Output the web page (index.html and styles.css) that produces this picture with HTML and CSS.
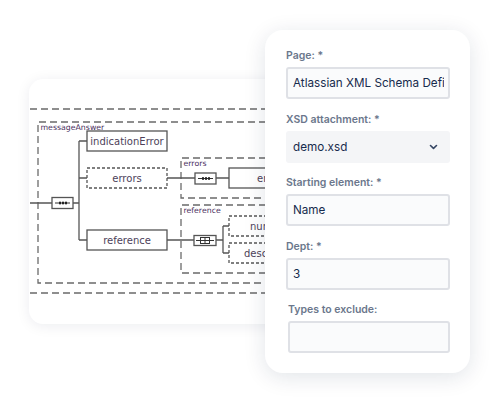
FILE: index.html
```html
<!DOCTYPE html>
<html>
<head>
<meta charset="utf-8">
<link rel="stylesheet" href="styles.css">
</head>
<body>
<div class="stage">
  <div class="diagram-card">
    <svg class="diagram" width="391" height="245" viewBox="29 79 391 245" xmlns="http://www.w3.org/2000/svg">
      <g fill="none" stroke="#6a6a6a" stroke-width="1.3" stroke-dasharray="7 4">
        <line x1="30" y1="109" x2="420" y2="109"/>
        <line x1="30" y1="293" x2="420" y2="293"/>
        <path d="M420 122 H38 V283 H420"/>
        <path d="M420 158 H181 V198 H420"/>
        <path d="M420 205 H181 V273 H420"/>
      </g>
      <g fill="none" stroke="#555" stroke-width="1.3">
        <line x1="30" y1="203" x2="52" y2="203"/>
        <rect x="52" y="197.5" width="21" height="11"/>
        <line x1="73" y1="203" x2="79" y2="203"/>
        <line x1="79" y1="141" x2="79" y2="240"/>
        <line x1="79" y1="141" x2="87" y2="141"/>
        <line x1="79" y1="178" x2="87" y2="178"/>
        <line x1="79" y1="240" x2="87" y2="240"/>
        <rect x="87" y="131" width="80" height="20"/>
        <rect x="87" y="168" width="80" height="20" stroke-dasharray="3 2"/>
        <rect x="87" y="230" width="80" height="20"/>
        <line x1="167" y1="178" x2="195" y2="178"/>
        <rect x="195" y="173" width="21" height="11"/>
        <line x1="216" y1="178" x2="229" y2="178"/>
        <rect x="229" y="168" width="110" height="20"/>
        <line x1="167" y1="240" x2="194" y2="240"/>
        <rect x="194" y="235.5" width="22" height="10"/>
        <line x1="216" y1="240" x2="223" y2="240"/>
        <line x1="223" y1="226" x2="223" y2="253"/>
        <line x1="223" y1="226" x2="229" y2="226"/>
        <line x1="223" y1="253" x2="229" y2="253"/>
        <rect x="229" y="216" width="100" height="20" stroke-dasharray="3 2"/>
        <rect x="229" y="243" width="100" height="20" stroke-dasharray="3 2"/>
      </g>
      <g stroke="#333" stroke-width="1">
        <line x1="55" y1="203" x2="70" y2="203"/>
        <line x1="198" y1="178.5" x2="213" y2="178.5"/>
        <line x1="196" y1="240.5" x2="214" y2="240.5"/>
        <rect x="200.5" y="237.5" width="9" height="6" fill="none"/>
        <line x1="205" y1="237.5" x2="205" y2="243.5"/>
      </g>
      <g fill="#222">
        <rect x="59" y="201.7" width="2" height="2.6"/>
        <rect x="62" y="201.7" width="2" height="2.6"/>
        <rect x="65" y="201.7" width="2" height="2.6"/>
        <rect x="202" y="177.2" width="2" height="2.6"/>
        <rect x="205" y="177.2" width="2" height="2.6"/>
        <rect x="208" y="177.2" width="2" height="2.6"/>
      </g>
      <g class="group-label">
        <text x="40.5" y="130">messageAnswer</text>
        <text x="183.5" y="166">errors</text>
        <text x="183.5" y="213">reference</text>
      </g>
      <g class="box-label" text-anchor="middle">
        <text x="127" y="144.5">indicationError</text>
        <text x="127" y="181.5">errors</text>
        <text x="127" y="243.5">reference</text>
      </g>
      <g class="box-label">
        <text x="257" y="181.5">error</text>
        <text x="250" y="229.5">num</text>
        <text x="244" y="256.5">desc</text>
      </g>
    </svg>
  </div>

  <form class="form-card">
    <div class="field">
      <label class="label">Page: *</label>
      <input class="input" type="text" value="Atlassian XML Schema Definition">
    </div>
    <div class="field">
      <label class="label">XSD attachment: *</label>
      <div class="select">
        <span>demo.xsd</span>
        <svg class="chevron" width="9" height="6" viewBox="0 0 9 6" xmlns="http://www.w3.org/2000/svg"><path d="M1.5 1.5 L4.5 4.4 L7.5 1.5" fill="none" stroke="#344563" stroke-width="1.6" stroke-linecap="round" stroke-linejoin="round"/></svg>
      </div>
    </div>
    <div class="field">
      <label class="label">Starting element: *</label>
      <input class="input" type="text" value="Name">
    </div>
    <div class="field">
      <label class="label">Dept: *</label>
      <input class="input" type="text" value="3">
    </div>
    <div class="field field-shift">
      <label class="label">Types to exclude:</label>
      <input class="input" type="text" value="">
    </div>
  </form>
</div>
</body>
</html>
```

FILE: styles.css
```css
html, body {
  margin: 0;
  background: #ffffff;
}

.stage {
  display: grid;
  width: 500px;
  height: 403px;
  overflow: hidden;
}

.diagram-card {
  grid-area: 1 / 1;
  align-self: start;
  justify-self: start;
  margin: 79px 0 0 29px;
  width: 391px;
  height: 245px;
  background: #ffffff;
  border-radius: 14px;
  box-shadow: 0 2px 14px rgba(9, 30, 66, 0.08);
  overflow: hidden;
}

.diagram {
  display: block;
}

.group-label {
  font-family: "DejaVu Sans", sans-serif;
  font-size: 7.8px;
  fill: #4a2f5e;
}

.box-label {
  font-family: "DejaVu Sans", sans-serif;
  font-size: 10px;
  fill: #4d3f5a;
}

.form-card {
  grid-area: 1 / 1;
  align-self: start;
  justify-self: start;
  margin: 30px 0 0 265px;
  width: 205px;
  box-sizing: border-box;
  padding: 18px 20px 20px 21px;
  background: #ffffff;
  border-radius: 18px;
  box-shadow: 0 4px 22px rgba(9, 30, 66, 0.12);
  display: flex;
  flex-direction: column;
  gap: 12.5px;
}

.field {
  display: flex;
  flex-direction: column;
  gap: 3px;
}

.field-shift {
  margin-left: 2px;
}

.label {
  font-family: Inter, "Noto Sans", sans-serif;
  font-weight: 600;
  font-size: 10.5px;
  line-height: 16px;
  color: #6b778c;
}

.input {
  display: block;
  width: 100%;
  height: 32px;
  box-sizing: border-box;
  margin: 0;
  border: 2px solid #dfe1e6;
  border-radius: 3px;
  background: #fafbfc;
  padding: 0 4px 0 5px;
  font-family: Inter, "Noto Sans", sans-serif;
  font-size: 11.7px;
  color: #172b4d;
  outline: none;
}

.select {
  height: 32px;
  box-sizing: border-box;
  border-radius: 3px;
  background: #f4f5f7;
  padding: 0 12px 0 7px;
  display: flex;
  align-items: center;
  justify-content: space-between;
  font-family: Inter, "Noto Sans", sans-serif;
  font-size: 11.7px;
  color: #172b4d;
}

.chevron {
  display: block;
}
```
